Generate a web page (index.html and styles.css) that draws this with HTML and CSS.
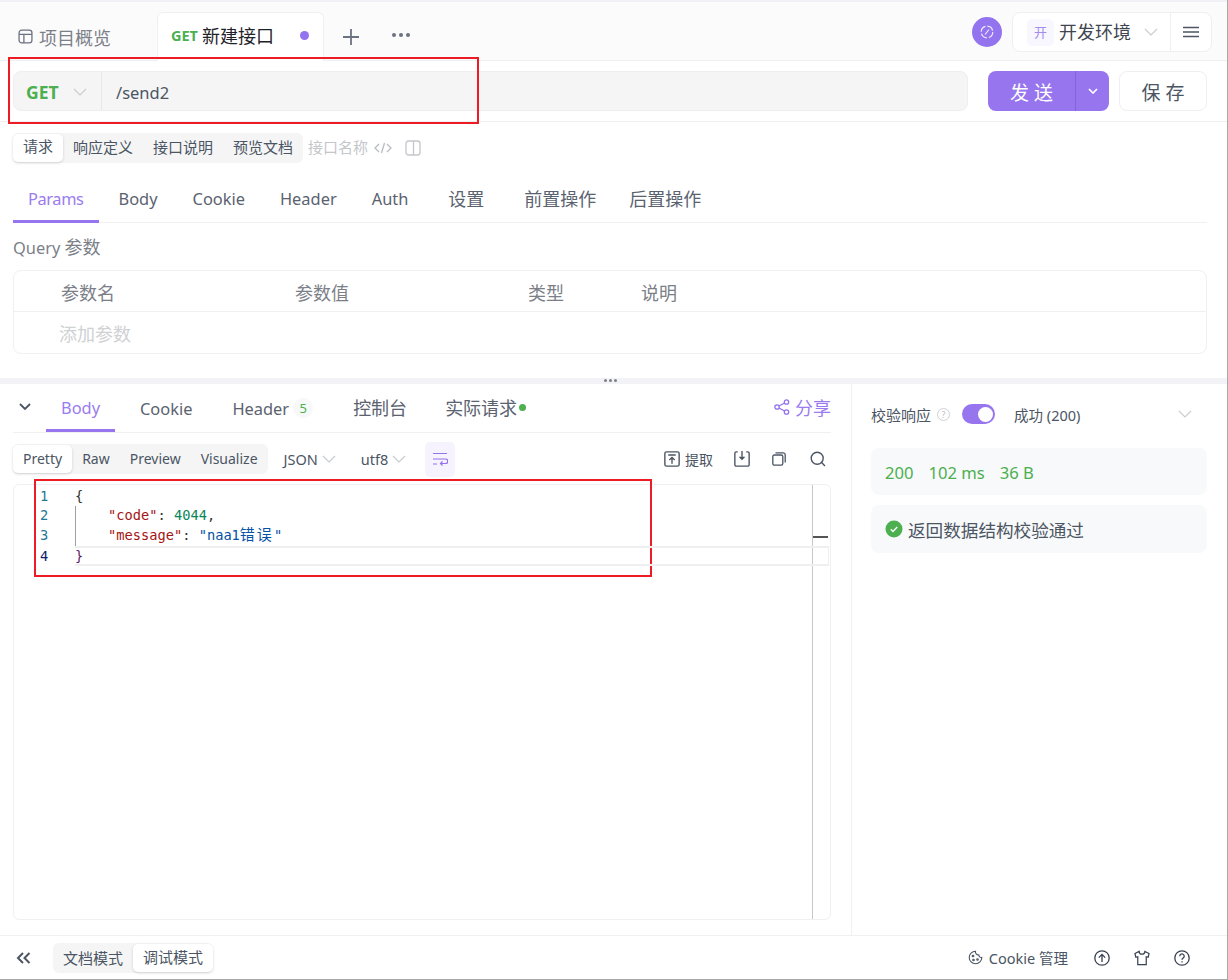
FILE: index.html
```html
<!DOCTYPE html>
<html lang="zh-CN">

<head>
    <meta charset="UTF-8">
    <title>新建接口</title>
    <link rel="stylesheet" href="styles.css">
</head>

<body>
    <div class="app">
        <!-- 顶部标签栏 -->
        <header class="tabbar">
            <div class="tab-overview">
                <svg class="ico" width="15" height="15" viewBox="0 0 14 14" fill="none" stroke="#6b7280" stroke-width="1.2"><rect x="1" y="1" width="12" height="12" rx="2.5"/><path d="M1 5h12M5.5 5v8"/></svg>
                <span>项目概览</span>
            </div>
            <div class="tab-active">
                <span class="get-small">GET</span>
                <span class="tab-name">新建接口</span>
                <i class="dot"></i>
            </div>
            <svg class="tab-plus" width="16" height="16" viewBox="0 0 16 16" stroke="#6b7280" stroke-width="1.8"><path d="M8 0v16M0 8h16"/></svg>
            <div class="tab-more"><i></i><i></i><i></i></div>
            <div class="tabbar-right">
                <div class="sync">
                    <svg width="16" height="16" viewBox="0 0 16 16" fill="none" stroke="#fff" stroke-width="1.2" opacity=".85"><circle cx="8" cy="8" r="5.8" stroke-dasharray="7 2"/><path d="M10 5.5 6 10.5"/></svg>
                </div>
                <div class="env">
                    <div class="env-main">
                        <span class="env-badge">开</span>
                        <span class="env-name">开发环境</span>
                        <svg class="chev" width="14" height="8" viewBox="0 0 14 8" fill="none" stroke="#c9ccd1" stroke-width="1.2"><path d="M1 1l6 6 6-6"/></svg>
                    </div>
                    <div class="env-menu">
                        <svg width="16" height="12" viewBox="0 0 16 12" stroke="#4b5563" stroke-width="1.7"><path d="M0 1.5h16M0 6h16M0 10.5h16"/></svg>
                    </div>
                </div>
            </div>
        </header>

        <!-- 地址栏 -->
        <section class="urlbar">
            <div class="url-input">
                <div class="method">
                    <span class="get">GET</span>
                    <svg width="14" height="8" viewBox="0 0 14 8" fill="none" stroke="#c9ccd1" stroke-width="1.2"><path d="M1 1l6 6 6-6"/></svg>
                </div>
                <div class="path">/send2</div>
            </div>
            <div class="send">
                <span class="send-text">发 送</span>
                <span class="send-arrow">
                    <svg width="10" height="6" viewBox="0 0 10 6" fill="none" stroke="#fff" stroke-width="1.7"><path d="M1 1l4 4 4-4"/></svg>
                </span>
            </div>
            <div class="save">保 存</div>
        </section>

        <!-- 请求 -->
        <section class="request">
            <div class="sub-row">
                <div class="seg seg-req">
                    <span class="seg-item on">请求</span>
                    <span class="seg-item">响应定义</span>
                    <span class="seg-item">接口说明</span>
                    <span class="seg-item">预览文档</span>
                </div>
                <span class="api-name">接口名称</span>
                <svg class="code-ico" width="18" height="12" viewBox="0 0 18 12" fill="none" stroke="#b9bcc2" stroke-width="1.3"><path d="M5 2L1 6l4 4M13 2l4 4-4 4M10.5 1l-3 10"/></svg>
                <svg class="panel-ico" width="16" height="16" viewBox="0 0 16 16" fill="none" stroke="#c4c6ca" stroke-width="1.3"><rect x="1" y="1" width="14" height="14" rx="2.5"/><path d="M8.5 1v14"/></svg>
            </div>

            <nav class="req-tabs">
                <span class="req-tab on">Params</span>
                <span class="req-tab">Body</span>
                <span class="req-tab">Cookie</span>
                <span class="req-tab">Header</span>
                <span class="req-tab">Auth</span>
                <span class="req-tab cjk tab-set">设置</span>
                <span class="req-tab cjk tab-pre">前置操作</span>
                <span class="req-tab cjk">后置操作</span>
            </nav>

            <div class="query-title">Query <span class="cjk">参数</span></div>
            <div class="param-table">
                <div class="param-head">
                    <span class="col-name">参数名</span>
                    <span class="col-value">参数值</span>
                    <span class="col-type">类型</span>
                    <span>说明</span>
                </div>
                <div class="param-add">添加参数</div>
            </div>
        </section>

        <div class="divider"><div class="divider-dots"><i></i><i></i><i></i></div></div>

        <!-- 响应 -->
        <section class="response">
            <div class="res-left">
                <div class="res-tabs">
                    <svg class="collapse" width="12" height="8" viewBox="0 0 12 8" fill="none" stroke="#4b5563" stroke-width="1.8"><path d="M1 1l5 5 5-5"/></svg>
                    <span class="res-tab on">Body</span>
                    <span class="res-tab">Cookie</span>
                    <span class="res-tab">Header <b class="count">5</b></span>
                    <span class="res-tab cjk tab-console">控制台</span>
                    <span class="res-tab cjk">实际请求<i class="green-dot"></i></span>
                    <span class="share">
                        <svg width="16" height="16" viewBox="0 0 16 16" fill="none" stroke="#9373ee" stroke-width="1.3"><circle cx="12.5" cy="3" r="2.2"/><circle cx="3" cy="8" r="2.2"/><circle cx="12.5" cy="13" r="2.2"/><path d="M5 7l5.6-3M5 9l5.6 3"/></svg>
                        分享
                    </span>
                </div>

                <div class="res-tools">
                    <div class="seg seg-small">
                        <span class="seg-item on">Pretty</span>
                        <span class="seg-item">Raw</span>
                        <span class="seg-item">Preview</span>
                        <span class="seg-item">Visualize</span>
                    </div>
                    <span class="select select-json">JSON
                        <svg width="14" height="8" viewBox="0 0 14 8" fill="none" stroke="#c9ccd1" stroke-width="1.2"><path d="M1 1l6 6 6-6"/></svg>
                    </span>
                    <span class="select select-utf">utf8
                        <svg width="14" height="8" viewBox="0 0 14 8" fill="none" stroke="#c9ccd1" stroke-width="1.2"><path d="M1 1l6 6 6-6"/></svg>
                    </span>
                    <span class="wrap-btn">
                        <svg width="16" height="14" viewBox="0 0 16 14" fill="none" stroke="#9373ee" stroke-width="1.2"><path d="M1 1.5h14M1 7h12.5a1.8 1.8 0 0 1 0 4.5H8.5M1 12h4M10.5 9.5l-2 2 2 2"/></svg>
                    </span>
                    <div class="tools-right">
                        <span class="extract">
                            <svg width="16" height="16" viewBox="0 0 15 15" fill="none" stroke="#4b5563" stroke-width="1.3"><rect x=".8" y=".8" width="13.4" height="13.4" rx="1.5"/><path d="M4 3.8h7M7.5 12V6.2M5 8.4l2.5-2.4L10 8.4"/></svg>
                            提取
                        </span>
                        <svg width="16" height="16" viewBox="0 0 15 15" fill="none" stroke="#4b5563" stroke-width="1.3"><path d="M3.5.8H2.2A1.4 1.4 0 0 0 .8 2.2v10.6a1.4 1.4 0 0 0 1.4 1.4h10.6a1.4 1.4 0 0 0 1.4-1.4V2.2A1.4 1.4 0 0 0 12.8.8h-1.3M7.5 0v7.5M5.2 5.4l2.3 2.4 2.3-2.4"/></svg>
                        <svg width="14" height="14" viewBox="0 0 14 14" fill="none" stroke="#4b5563" stroke-width="1.3"><rect x=".8" y="3" width="10" height="10.2" rx="1.6"/><path d="M3.5.8h7.7a2 2 0 0 1 2 2v7.7"/></svg>
                        <svg class="search-ico" width="16" height="16" viewBox="0 0 16 16" fill="none" stroke="#4b5563" stroke-width="1.4"><circle cx="7.2" cy="7.2" r="6"/><path d="M11.6 11.6l3.4 3.4"/></svg>
                    </div>
                </div>

                <div class="editor">
                    <div class="code">
                        <div class="gutter">
                            <div>1</div>
                            <div class="num-mid">2</div>
                            <div class="num-mid">3</div>
                            <div>4</div>
                        </div>
                        <div class="lines">
                            <div class="line"><span class="bk1">{</span></div>
                            <div class="line indent"><span class="key">"code"</span>: <span class="num">4044</span>,</div>
                            <div class="line indent"><span class="key">"message"</span>: <span class="str">"naa1<span class="str-cjk">错误</span>"</span></div>
                            <div class="line line-cur"><span class="bk2">}</span></div>
                        </div>
                    </div>
                    <div class="minimap"><div class="mini-mark"></div></div>
                </div>
            </div>

            <aside class="res-right">
                <div class="check-row">
                    <span class="check-label">校验响应</span>
                    <span class="help">?</span>
                    <span class="toggle"><i></i></span>
                    <span class="check-status">成功 (200)</span>
                    <svg class="check-chev" width="14" height="8" viewBox="0 0 14 8" fill="none" stroke="#c9ccd1" stroke-width="1.2"><path d="M1 1l6 6 6-6"/></svg>
                </div>
                <div class="stat-box">
                    <span>200</span>
                    <span>102 ms</span>
                    <span>36 B</span>
                </div>
                <div class="pass-box">
                    <svg width="18" height="18" viewBox="0 0 18 18"><circle cx="9" cy="9" r="8.5" fill="#4caf50"/><path d="M5.8 9.2l2.2 2.2 4.2-4.4" fill="none" stroke="#fff" stroke-width="1.4"/></svg>
                    <span>返回数据结构校验通过</span>
                </div>
            </aside>
        </section>

        <footer class="footer">
            <svg class="fold" width="15" height="12" viewBox="0 0 15 12" fill="none" stroke="#4b5563" stroke-width="2"><path d="M7 1L2 6l5 5M13.5 1l-5 5 5 5"/></svg>
            <div class="seg seg-foot">
                <span class="seg-item">文档模式</span>
                <span class="seg-item on">调试模式</span>
            </div>
            <div class="footer-right">
                <span class="cookie">
                    <svg width="15" height="15" viewBox="0 0 15 15" fill="none" stroke="#4b5563" stroke-width="1.1"><path d="M7.5 1.2a6.3 6.3 0 1 0 6.3 6.3 2.6 2.6 0 0 1-3-2.6 3 3 0 0 1-3.3-3.7z"/><circle cx="5" cy="6" r=".8"/><circle cx="5.5" cy="10" r=".8"/><circle cx="9.5" cy="9.5" r=".8"/></svg>
                    Cookie 管理
                </span>
                <svg width="16" height="16" viewBox="0 0 16 16" fill="none" stroke="#374151" stroke-width="1.3"><circle cx="8" cy="8" r="7.2"/><path d="M8 12V4.5M4.8 7.6L8 4.4l3.2 3.2"/></svg>
                <svg width="16" height="16" viewBox="0 0 17 16" fill="none" stroke="#374151" stroke-width="1.3"><path d="M5.5 1L1 3.2l1 4 2-.5V15h9V6.7l2 .5 1-4L11.5 1a3 3 0 0 1-6 0z"/></svg>
                <svg width="16" height="16" viewBox="0 0 16 16" fill="none" stroke="#374151" stroke-width="1.3"><circle cx="8" cy="8" r="7.2"/><path d="M5.8 6.2a2.2 2.2 0 1 1 3.4 1.8C8.5 8.5 8 9 8 9.8M8 11.2v1.2"/></svg>
            </div>
        </footer>

        <!-- 截图上的红框标注 -->
        <div class="mark mark-url"></div>
        <div class="mark mark-code"></div>
    </div>
</body>

</html>
```

FILE: styles.css
```css
* {
    margin: 0;
    padding: 0;
    box-sizing: border-box;
}

body {
    background: #fff;
    font-family: "Noto Sans", "Noto Sans CJK SC", sans-serif;
    color: #4b5563;
}

i {
    display: block;
    font-style: normal;
}

.cjk {
    font-size: 18px;
}

.app {
    position: relative;
    display: flex;
    flex-direction: column;
    width: 1228px;
    height: 980px;
    overflow: hidden;
    border-right: 1px solid #a9a9a9;
    border-bottom: 1px solid #a9a9a9;
}

/* top tabs */
.tabbar {
    display: flex;
    align-items: flex-end;
    height: 61px;
    padding-left: 18px;
    background: #fbfbfc;
    border-top: 2px solid #f0f0f5;
    border-bottom: 1px solid #eeeff1;
}

.tab-overview {
    display: flex;
    align-items: center;
    gap: 6px;
    width: 139px;
    height: 47px;
    font-size: 18px;
    color: #7b8088;
}

.tab-active {
    display: flex;
    align-items: center;
    width: 167px;
    height: 49px;
    margin-bottom: -1px;
    padding: 0 14px 4px 13px;
    background: #fff;
    border: 1px solid #f0f0f2;
    border-bottom: 0;
    border-radius: 6px 6px 0 0;
}

.get-small {
    font-size: 14.5px;
    font-weight: 700;
    color: #4caf50;
    margin-right: 4px;
}

.tab-name {
    flex: 1;
    font-size: 18px;
    color: #1f2329;
}

.dot {
    width: 9px;
    height: 9px;
    border-radius: 50%;
    background: #9373ee;
}

.tab-plus {
    margin: 0 0 15px 19px;
}

.tab-more {
    display: flex;
    gap: 3px;
    margin: 0 0 23px 33px;
}

.tab-more i {
    width: 4px;
    height: 4px;
    border-radius: 50%;
    background: #6b7280;
}

.tabbar-right {
    display: flex;
    align-items: center;
    gap: 10px;
    margin-left: auto;
    margin-right: 15px;
    margin-bottom: 8px;
}

.sync {
    display: flex;
    align-items: center;
    justify-content: center;
    width: 30px;
    height: 30px;
    border-radius: 50%;
    background: #9373ee;
}

.env {
    display: flex;
    align-items: center;
    width: 200px;
    height: 40px;
    background: #fff;
    border: 1px solid #eeeff1;
    border-radius: 8px;
}

.env-main {
    display: flex;
    align-items: center;
    flex: 1;
    height: 100%;
    padding-left: 14px;
    border-right: 1px solid #eeeff1;
}

.env-badge {
    width: 27px;
    height: 27px;
    border-radius: 5px;
    background: #f8f6fe;
    color: #a58cf0;
    font-size: 13px;
    line-height: 27px;
    text-align: center;
}

.env-name {
    margin-left: 5px;
    padding-bottom: 2px;
    font-size: 18px;
    color: #3f4650;
}

.chev {
    margin-left: 13px;
}

.env-menu {
    display: flex;
    align-items: center;
    justify-content: center;
    width: 40px;
}

/* url row */
.urlbar {
    display: flex;
    align-items: center;
    height: 61px;
    padding: 0 20px 1px 13px;
    border-bottom: 1px solid #eeeff1;
}

.url-input {
    display: flex;
    flex: 1;
    height: 40px;
    background: #f5f5f5;
    border: 1px solid #eeeeef;
    border-radius: 8px;
}

.method {
    display: flex;
    align-items: center;
    justify-content: space-between;
    width: 88px;
    padding: 2px 14px 0 12px;
    border-right: 1px solid #e8e8ea;
}

.get {
    font-size: 17.5px;
    font-weight: 700;
    color: #4caf50;
}

.path {
    padding: 2px 0 0 14px;
    font-size: 16.5px;
    line-height: 38px;
    color: #4b5563;
}

.send {
    display: flex;
    width: 121px;
    height: 40px;
    margin-left: 20px;
    background: #9675ee;
    border-radius: 8px;
    color: #fff;
    font-size: 19px;
    line-height: 44px;
}

.send-text {
    width: 87px;
    text-align: center;
}

.send-arrow {
    display: flex;
    align-items: center;
    justify-content: center;
    flex: 1;
    border-left: 1px solid #8563db;
}

.save {
    width: 88px;
    height: 40px;
    margin-left: 10px;
    border: 1px solid #eeeff1;
    border-radius: 8px;
    font-size: 19px;
    line-height: 42px;
    text-align: center;
}

/* request area */
.request {
    height: 256px;
    padding: 11px 20px 0 13px;
}

.sub-row {
    display: flex;
    align-items: center;
    height: 30px;
}

.seg {
    display: flex;
    align-items: center;
    height: 30px;
    background: #f5f5f6;
    border-radius: 6px;
}

.seg-item {
    padding: 0 10px;
    font-size: 15px;
    line-height: 26px;
    color: #4b5563;
}

.seg-req .seg-item {
    line-height: 24px;
    padding-bottom: 2px;
}

.seg-item.on {
    height: 28px;
    background: #fff;
    border-radius: 5px;
    box-shadow: 0 1px 3px rgba(0, 0, 0, .16);
}

.api-name {
    margin-left: 5px;
    padding-bottom: 4px;
    font-size: 15px;
    color: #c4c6ca;
}

.code-ico {
    margin-left: 6px;
}

.panel-ico {
    margin-left: 13px;
}

.req-tabs {
    display: flex;
    height: 43px;
    margin-top: 17px;
    border-bottom: 1px solid #f0f0f2;
}

.req-tab {
    padding: 0 15px;
    margin-right: 5px;
    font-size: 16.4px;
    line-height: 38px;
    color: #5a6270;
}

.req-tab.cjk {
    font-size: 18px;
}

.tab-set {
    margin-left: 5px;
    margin-right: 10px;
}

.tab-pre {
    margin-right: 3px;
}

.req-tab.on {
    color: #9a7cef;
    letter-spacing: -.4px;
    border-bottom: 3px solid #9675ee;
    height: 43px;
}

.query-title {
    margin-top: 11px;
    font-size: 16.4px;
    line-height: 26px;
    color: #7b8088;
}

.param-table {
    height: 84px;
    margin-top: 9px;
    border: 1px solid #f0f0f2;
    border-radius: 8px;
}

.param-head {
    display: flex;
    height: 41px;
    padding-left: 47px;
    border-bottom: 1px solid #f0f0f2;
    font-size: 18px;
    line-height: 45px;
    color: #7b8088;
}

.col-name {
    width: 234px;
}

.col-value {
    width: 233px;
}

.col-type {
    width: 113px;
}

.param-add {
    padding-left: 45px;
    font-size: 18px;
    line-height: 44px;
    color: #cfd1d4;
}

.divider {
    position: relative;
    height: 6px;
    background: #f2f2f7;
}

.divider-dots {
    position: absolute;
    left: 604px;
    top: 1px;
    display: flex;
    gap: 2px;
}

.divider-dots i {
    width: 3px;
    height: 3px;
    border-radius: 50%;
    background: #7b8088;
}

/* response */
.response {
    display: flex;
    flex: 1;
    min-height: 0;
}

.res-left {
    display: flex;
    flex-direction: column;
    width: 852px;
    padding: 0 20px 15px 13px;
    border-right: 1px solid #f0f0f2;
}

.res-tabs {
    display: flex;
    align-items: flex-start;
    height: 49px;
    border-bottom: 1px solid #f0f0f2;
}

.collapse {
    margin: 19px 0 0 6px;
}

.res-tab {
    display: flex;
    align-items: center;
    height: 48px;
    padding: 0 15px;
    margin-right: 10px;
    font-size: 16.4px;
    color: #5a6270;
}

.res-tab.cjk {
    font-size: 18px;
    padding-bottom: 2px;
}

.res-tab.on {
    margin-left: 15px;
    padding-top: 2px;
    color: #9a7cef;
    border-bottom: 3px solid #9675ee;
}

.tab-console {
    margin-right: 8px;
}

.count {
    display: block;
    width: 20px;
    height: 20px;
    margin-left: 4px;
    border-radius: 50%;
    background: #f7f8f8;
    color: #4caf50;
    font-size: 13px;
    font-weight: 400;
    line-height: 20px;
    text-align: center;
}

.green-dot {
    width: 7px;
    height: 7px;
    margin-left: 2px;
    border-radius: 50%;
    background: #4caf50;
}

.share {
    display: flex;
    align-items: center;
    gap: 5px;
    height: 48px;
    margin-left: auto;
    padding-bottom: 2px;
    font-size: 18px;
    color: #9a7cef;
}

.res-tools {
    display: flex;
    align-items: center;
    height: 34px;
    margin-top: 9px;
}

.seg-small .seg-item {
    font-size: 14px;
    line-height: 28px;
}

.select {
    display: flex;
    align-items: center;
    gap: 4px;
    font-size: 14.5px;
    color: #4b5563;
}

.select-json {
    margin-left: 16px;
}

.select-utf {
    margin-left: 25px;
}

.wrap-btn {
    display: flex;
    align-items: center;
    justify-content: center;
    width: 30px;
    height: 35px;
    margin-left: 19px;
    background: #f6f3fe;
    border-radius: 5px;
}

.tools-right {
    display: flex;
    align-items: center;
    gap: 22px;
    margin-left: auto;
    margin-right: 5px;
}

.search-ico {
    margin-left: 2px;
}

.extract {
    display: flex;
    align-items: center;
    gap: 5px;
    margin-right: -1px;
    font-size: 14px;
    color: #4b5563;
}

.editor {
    display: flex;
    flex: 1;
    margin-top: 8px;
    border: 1px solid #f0f0f2;
    border-radius: 6px;
    overflow: hidden;
}

.code {
    display: flex;
    flex: 1;
    padding-top: 1px;
    font-family: "DejaVu Sans Mono", "Noto Sans CJK SC", monospace;
    font-size: 13.7px;
    line-height: 20px;
}

.gutter {
    width: 61px;
    padding-left: 26px;
    color: #237893;
}

.gutter div {
    height: 20px;
}

.gutter .num-mid {
    line-height: 18px;
}

.gutter div:last-child {
    color: #0b216f;
}

.lines {
    flex: 1;
    color: #333;
}

.line {
    height: 20px;
    white-space: pre;
}

.indent {
    padding-left: 33px;
    line-height: 18px;
    box-shadow: inset 1px 0 0 #a0a0a0;
}

.line-cur {
    position: relative;
    z-index: 1;
    margin-right: -17px;
    border: 2px solid #efefef;
    border-left: 0;
    border-right-width: 1px;
    line-height: 16px;
}

.bk1 {
    color: #333;
}

.bk2 {
    color: #5a1a6a;
}

.key {
    color: #a31515;
}

.num {
    color: #098658;
}

.str {
    color: #0451a5;
}

.str-cjk {
    font-size: 15px;
    letter-spacing: 2px;
}

.minimap {
    position: relative;
    width: 18px;
    border-left: 1px solid #c8c8c8;
}

.mini-mark {
    position: absolute;
    left: 0;
    right: 2px;
    top: 51px;
    height: 2px;
    background: #555;
}

/* right side */
.res-right {
    flex: 1;
    padding: 0 20px 0 19px;
}

.check-row {
    display: flex;
    align-items: center;
    height: 60px;
    margin-bottom: 4px;
    font-size: 15px;
    color: #4b5563;
}

.help {
    width: 13px;
    height: 13px;
    margin-left: 6px;
    border: 1px solid #cfd1d4;
    border-radius: 50%;
    color: #bfc1c5;
    font-size: 9px;
    line-height: 11px;
    text-align: center;
}

.toggle {
    display: flex;
    align-items: center;
    justify-content: flex-end;
    width: 33px;
    height: 20px;
    margin-left: 12px;
    padding-right: 2px;
    background: #9675ee;
    border-radius: 10px;
}

.toggle i {
    width: 15px;
    height: 15px;
    border-radius: 50%;
    background: #fff;
}

.check-status {
    margin-left: 19px;
    font-size: 14.5px;
}

.check-chev {
    margin-left: auto;
    margin-right: 15px;
}

.stat-box {
    display: flex;
    gap: 15px;
    height: 47px;
    padding-left: 14px;
    background: #f8f9fa;
    border-radius: 8px;
    color: #4caf50;
    font-size: 16.6px;
    line-height: 49px;
}

.pass-box {
    display: flex;
    align-items: center;
    gap: 5px;
    height: 48px;
    margin-top: 10px;
    padding-left: 14px;
    background: #f8f9fa;
    border-radius: 8px;
    font-size: 17.6px;
    color: #4b5563;
}

/* footer */
.footer {
    display: flex;
    align-items: center;
    height: 44px;
    padding: 0 37px 0 16px;
    border-top: 1px solid #f0f0f2;
}

.fold {
    margin-right: 22px;
}

.seg-foot .seg-item {
    font-size: 15px;
}

.footer-right {
    display: flex;
    align-items: center;
    gap: 24px;
    margin-left: auto;
}

.cookie {
    display: flex;
    align-items: center;
    gap: 6px;
    font-size: 14.5px;
    color: #4b5563;
    margin-right: 2px;
}

/* red annotation boxes */
.mark {
    position: absolute;
    border: 2px solid #ed1c24;
    pointer-events: none;
}

.mark-url {
    left: 8px;
    top: 57px;
    width: 471px;
    height: 67px;
}

.mark-code {
    left: 34px;
    top: 479px;
    width: 618px;
    height: 98px;
}
```
